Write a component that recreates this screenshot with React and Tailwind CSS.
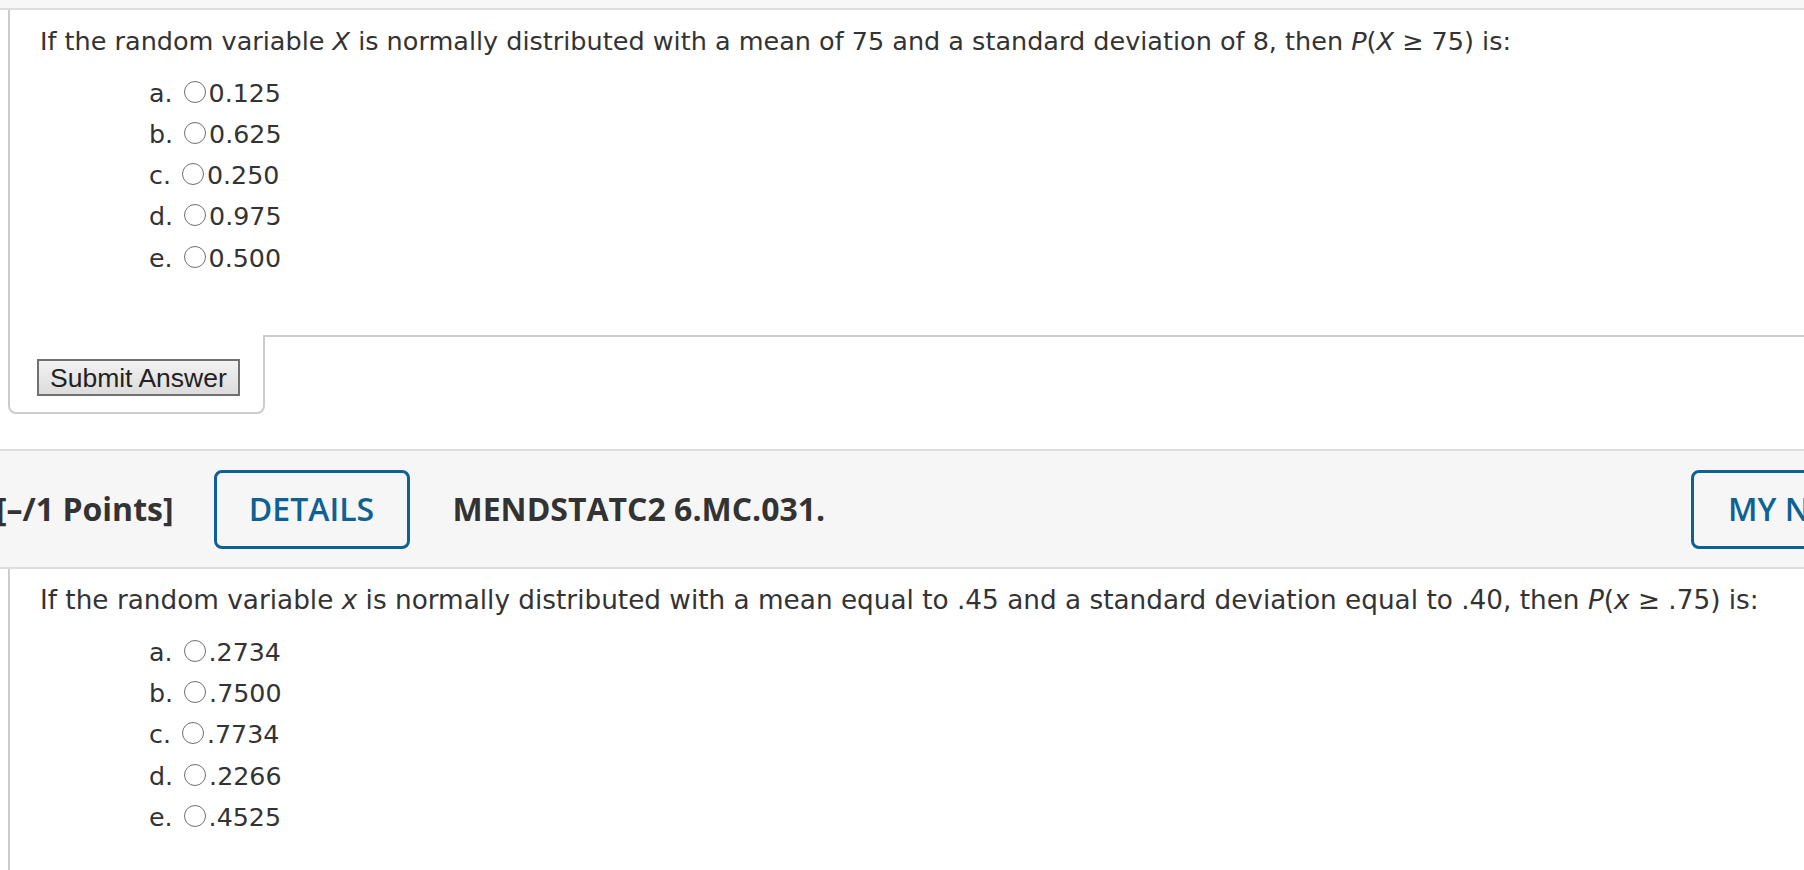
import React from "react";

const q1Options = [
  ["a.", "0.125"],
  ["b.", "0.625"],
  ["c.", "0.250"],
  ["d.", "0.975"],
  ["e.", "0.500"],
];

const q2Options = [
  ["a.", ".2734"],
  ["b.", ".7500"],
  ["c.", ".7734"],
  ["d.", ".2266"],
  ["e.", ".4525"],
];

const qFont = { fontFamily: '"DejaVu Sans", Verdana, sans-serif' };
const headFont = { fontFamily: '"Open Sans", sans-serif' };

function Radio() {
  return (
    <span className="block w-[22px] h-[22px] rounded-full border-[1.5px] border-[#707070] bg-white relative top-[-2px]" />
  );
}

function Options({ items }) {
  return (
    <div className="pl-[139px]">
      {items.map(([letter, value]) => (
        <div key={letter} className="h-[41.25px] flex items-center text-[25.3px] text-[#333]">
          <span>{letter}</span>
          <span className="ml-[11px] mr-[3px]">
            <Radio />
          </span>
          <span>{value}</span>
        </div>
      ))}
    </div>
  );
}

export default function App() {
  return (
    <div className="w-[1804px] h-[870px] overflow-hidden bg-white" style={qFont}>
      <div className="h-[10px] bg-[#f7f7f7] border-b-2 border-[#dddddd]" />

      {/* question 1 */}
      <div className="ml-[8px] border-l-2 border-[#cccccc]">
        <div className="pt-[15px] pl-[30px] leading-[32px] text-[25.5px] text-[#333] whitespace-nowrap">
          If the random variable <i>X</i> is normally distributed with a mean of 75 and a
          standard deviation of 8, then <i>P</i>(<i>X</i> ≥ 75) is:
        </div>
        <div className="mt-[16px]">
          <Options items={q1Options} />
        </div>
        <div className="h-[56px]" />
      </div>
      <div className="flex">
        <div className="ml-[8px] w-[257px] h-[79px] border-l-2 border-r-2 border-b-2 border-[#cccccc] rounded-b-[8px] pt-[24px] pl-[27px]">
          <button
            className="h-[37px] px-[11px] border-2 border-[#707070] bg-gradient-to-b from-[#f2f2f2] to-[#dcdcdc] text-[26.5px] leading-none text-[#222]"
            style={{ fontFamily: '"Liberation Sans", Arial, sans-serif' }}
          >
            Submit Answer
          </button>
        </div>
        <div className="flex-1 border-t-2 border-[#cccccc]" />
      </div>

      <div className="h-[35px]" />

      {/* header bar */}
      <div
        className="h-[120px] bg-[#f6f6f6] border-t-2 border-b-2 border-[#dddddd] flex items-center overflow-hidden"
        style={headFont}
      >
        <span className="-ml-[4px] text-[32px] font-bold text-[#333]">[–/1 Points]</span>
        <div className="ml-[40px] w-[196px] h-[79px] border-[3px] border-[#0d6194] rounded-[8px] flex items-center justify-center text-[32px] font-semibold text-[#0d6194]">
          DETAILS
        </div>
        <span className="ml-[43px] text-[32px] font-bold text-[#333]">MENDSTATC2 6.MC.031.</span>
        <div className="ml-auto mr-[-90px] shrink-0 w-[203px] h-[79px] border-[3px] border-[#0d6194] rounded-[8px] flex items-center pl-[34px] text-[32px] font-semibold text-[#0d6194] whitespace-nowrap">
          MY NOTES
        </div>
      </div>

      {/* question 2 */}
      <div className="ml-[8px] border-l-2 border-[#cccccc] h-[400px]">
        <div className="pt-[15px] pl-[30px] leading-[32px] text-[26.3px] text-[#333] whitespace-nowrap">
          If the random variable <i>x</i> is normally distributed with a mean equal to .45 and a
          standard deviation equal to .40, then <i>P</i>(<i>x</i> ≥ .75) is:
        </div>
        <div className="mt-[16px]">
          <Options items={q2Options} />
        </div>
      </div>
    </div>
  );
}
